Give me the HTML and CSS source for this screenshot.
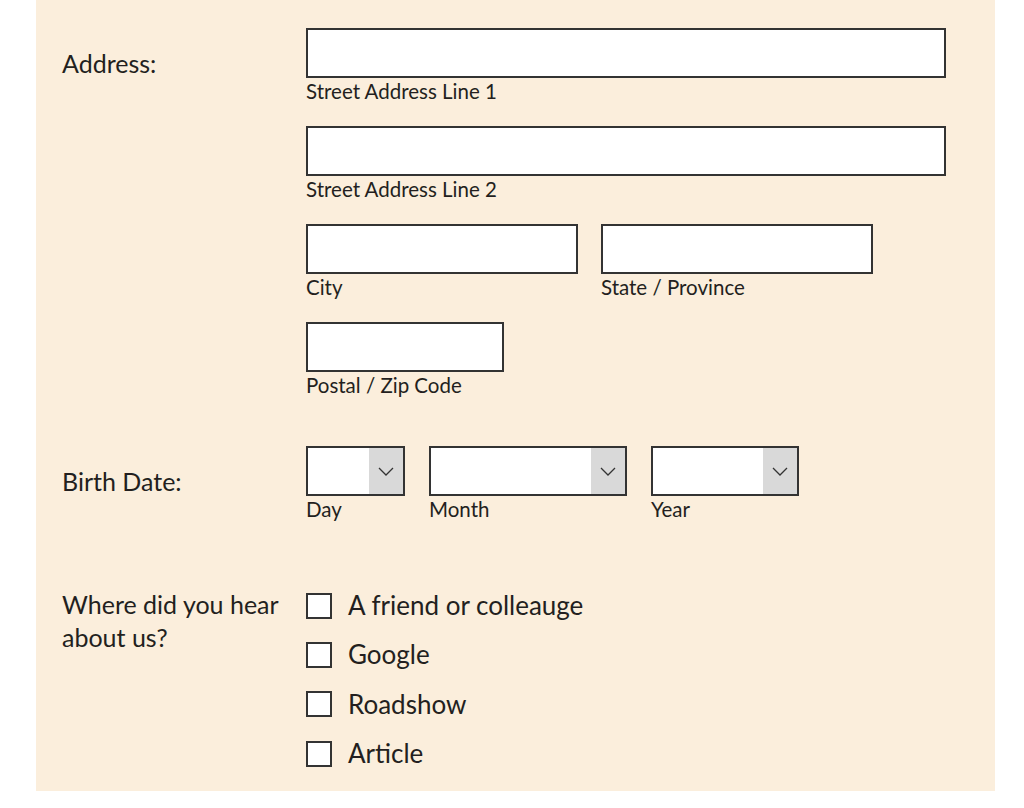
FILE: index.html
```html
<!doctype html>
<html lang="en">
<head>
  <meta charset="UTF-8">
  <meta name="viewport" content="width=device-width, initial-scale=1.0">
  <title>Contact details</title>
  <link rel="stylesheet" href="styles.css">
</head>
<body>
<form class="panel">
  <div class="row address">
    <div class="label">Address:</div>
    <div class="fields">
      <div class="group">
        <input type="text" class="wide">
        <span class="caption">Street Address Line 1</span>
      </div>
      <div class="group">
        <input type="text" class="wide">
        <span class="caption">Street Address Line 2</span>
      </div>
      <div class="pair">
        <div class="group">
          <input type="text" class="half">
          <span class="caption">City</span>
        </div>
        <div class="group">
          <input type="text" class="half">
          <span class="caption">State / Province</span>
        </div>
      </div>
      <div class="group">
        <input type="text" class="short">
        <span class="caption">Postal / Zip Code</span>
      </div>
    </div>
  </div>

  <div class="row birth">
    <div class="label">Birth Date:</div>
    <div class="fields selects">
      <div class="group">
        <div class="select day">
          <select></select>
          <span class="arrow"><svg width="16" height="9" viewBox="0 0 16 9"><path d="M1 1 L8 8 L15 1" fill="none" stroke="#333" stroke-width="1.3"/></svg></span>
        </div>
        <span class="caption">Day</span>
      </div>
      <div class="group">
        <div class="select month">
          <select></select>
          <span class="arrow"><svg width="16" height="9" viewBox="0 0 16 9"><path d="M1 1 L8 8 L15 1" fill="none" stroke="#333" stroke-width="1.3"/></svg></span>
        </div>
        <span class="caption">Month</span>
      </div>
      <div class="group">
        <div class="select year">
          <select></select>
          <span class="arrow"><svg width="16" height="9" viewBox="0 0 16 9"><path d="M1 1 L8 8 L15 1" fill="none" stroke="#333" stroke-width="1.3"/></svg></span>
        </div>
        <span class="caption">Year</span>
      </div>
    </div>
  </div>

  <div class="row hear">
    <div class="label">Where did you hear about us?</div>
    <div class="fields checks">
      <label class="check"><input type="checkbox"> A friend or colleauge</label>
      <label class="check"><input type="checkbox"> Google</label>
      <label class="check"><input type="checkbox"> Roadshow</label>
      <label class="check"><input type="checkbox"> Article</label>
    </div>
  </div>
</form>
</body>
</html>
```

FILE: styles.css
```css
* {
  margin: 0;
  padding: 0;
  box-sizing: border-box;
}

body {
  background: #fff;
  font-family: Lato, "Open Sans", sans-serif;
  color: #231f20;
}

.panel {
  margin-left: 36px;
  width: 959px;
  height: 791px;
  background: #fbeedc;
  padding-top: 28px;
}

.row {
  display: flex;
}

.label {
  width: 270px;
  padding-left: 26px;
  padding-right: 20px;
  font-size: 25px;
  line-height: 33px;
}

.fields {
  display: flex;
  flex-direction: column;
}

.group {
  display: flex;
  flex-direction: column;
  margin-bottom: 23px;
}

.caption {
  font-size: 20.5px;
  line-height: 24px;
  margin-top: 1px;
}

input[type="text"] {
  height: 50px;
  border: 2px solid #333;
  background: #fff;
}

.wide {
  width: 640px;
}

.half {
  width: 272px;
}

.short {
  width: 198px;
}

.pair {
  display: flex;
  gap: 23px;
}

.address .label {
  padding-top: 19px;
}

/* birth date */
.birth {
  margin-top: 26px;
}

.birth .label {
  padding-top: 19px;
}

.selects {
  flex-direction: row;
  gap: 24px;
}

.select {
  display: flex;
  height: 50px;
  border: 2px solid #333;
  background: #fff;
}

.select select {
  flex: 1;
  border: 0;
  background: #fff;
  appearance: none;
  -webkit-appearance: none;
}

.select .arrow {
  width: 34px;
  background: #d9d9d9;
  display: flex;
  align-items: center;
  justify-content: center;
}

.day {
  width: 99px;
}

.month {
  width: 198px;
}

.year {
  width: 148px;
}

/* where did you hear */
.hear {
  margin-top: 44px;
}

.checks {
  padding-top: 1px;
  gap: 16.4px;
}

.check {
  display: flex;
  align-items: center;
  gap: 16px;
  font-size: 26px;
  line-height: 33px;
}

.check input {
  appearance: none;
  -webkit-appearance: none;
  width: 26px;
  height: 26px;
  border: 2px solid #333;
  background: #fff;
}
```
